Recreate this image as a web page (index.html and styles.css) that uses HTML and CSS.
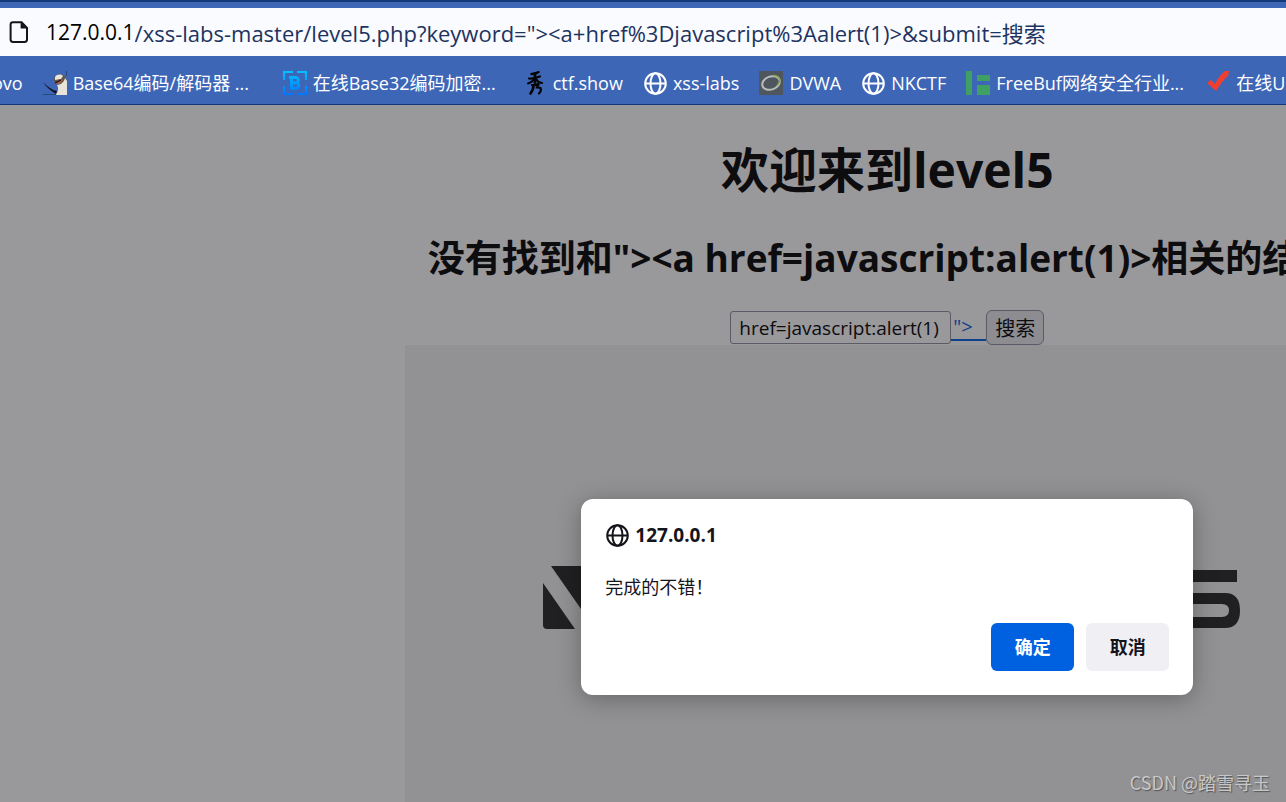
FILE: index.html
```
<!DOCTYPE html>
<html lang="zh-CN">
<head>
  <meta charset="UTF-8" />
  <meta name="viewport" content="width=device-width, initial-scale=1.0" />
  <title>欢迎来到level5</title>
  <link rel="stylesheet" href="styles.css">
</head>
<body>
  <!-- shared globe icon -->
  <svg class="sprite" aria-hidden="true">
    <symbol id="globe" viewBox="0 0 24 24">
      <g fill="none" stroke="currentColor" stroke-width="2">
        <circle cx="12.500" cy="12.500" r="10.300" />
        <ellipse cx="12.500" cy="12.500" rx="5" ry="10.300" />
        <path d="M2 12.500h21" />
      </g>
    </symbol>
  </svg>

  <header class="browser">
    <div class="urlbar">
      <svg class="page-icon" viewBox="0 0 20 24" aria-hidden="true">
        <path d="M4 2.2h8.6l5.4 5.600v11.800a2.400 2.400 0 0 1-2.400 2.400H4a2.400 2.400 0 0 1-2.400-2.400V4.600A2.400 2.400 0 0 1 4 2.200z" fill="none" stroke="#15141a" stroke-width="2" />
        <path d="M11.600 2v6.600H18z" fill="#15141a" />
      </svg>
      <label class="host" for="url">127.0.0.1</label>
      <input class="url" id="url" type="text" value="/xss-labs-master/level5.php?keyword=&quot;&gt;&lt;a+href%3Djavascript%3Aalert(1)&gt;&amp;submit=搜索">
    </div>

    <nav class="bookmarks">
      <a class="bookmark" href="#">ovo</a>
      <a class="bookmark long" href="#">
        <svg viewBox="0 0 24 24" aria-hidden="true">
          <path d="M0 11c5 5 9 8 14 9l-1 3C8 20 3 16 0 11z" fill="#10131b" />
          <path d="M0 23.500h15M23.500 0v5" stroke="#27477f" />
          <path d="M11 7c2-4 8-5 11-2l2 4v14H13c2-4 4-7 2-10-2-1-5-3-4-6z" fill="#5e564e" />
          <path d="M14 14c4 0 7-3 8-7l2 3v14H13c2-4 3-7 1-10z" fill="#e9e4da" />
          <path d="M12 6c2-3 6-3 8-1l-2 3-6 1z" fill="#e9e4da" />
          <path d="M11 12l5-4 4 1-4 4z" fill="#c4603d" />
          <path d="M12 12l6-3" stroke="#222" stroke-width="1.500" />
        </svg>
        <span>Base64编码/解码器 ...</span>
      </a>
      <a class="bookmark long" href="#">
        <svg viewBox="0 0 24 24" aria-hidden="true">
          <defs>
            <linearGradient id="cyan" gradientUnits="userSpaceOnUse" x1="0" y1="0" x2="0" y2="24">
              <stop offset="0" stop-color="#00c3ff" />
              <stop offset="1" stop-color="#0076ff" />
            </linearGradient>
          </defs>
          <path d="M1 9V1h9M14 1h9v8M23 15v8h-9M10 23H1v-8" fill="none" stroke="url(#cyan)" stroke-width="2.200" />
          <path d="M8.500 6.500v11H13a2.750 2.750 0 0 0 0-5.500H8.500h4a2.750 2.750 0 0 0 0-5.500H6" fill="none" stroke="url(#cyan)" stroke-width="3" />
        </svg>
        <span>在线Base32编码加密...</span>
      </a>
      <a class="bookmark" href="#">
        <svg viewBox="0 0 24 24" aria-hidden="true">
          <g fill="none" stroke="#050505" stroke-linecap="round">
            <path d="M8.500 3c3 0 5-.5 7-2" stroke-width="2.400" />
            <path d="M6 7.500c4 .5 7-.5 11-2" stroke-width="2.200" />
            <path d="M12 2.500v9" stroke-width="2.800" />
            <path d="M11 8c-1 2-3 3.500-6 4.500M13 8c1 2 3 3.500 6 4" stroke-width="2" />
            <path d="M9 14c3 .5 5 0 7-1.500l-2 4 3.500.5c1 2 0 4-1.500 5.500" stroke-width="2.200" />
            <path d="M10.500 14c0 4-1 6-3 8.500" stroke-width="2.600" />
          </g>
        </svg>
        <span>ctf.show</span>
      </a>
      <a class="bookmark" href="#">
        <svg aria-hidden="true"><use href="#globe" /></svg>
        <span>xss-labs</span>
      </a>
      <a class="bookmark" href="#">
        <svg viewBox="0 0 24 24" aria-hidden="true">
          <path d="M0 0h24v24H0z" fill="#50565e" />
          <ellipse cx="12" cy="12" rx="9" ry="6.500" transform="rotate(-20 12 12)" fill="none" stroke="#b9bdbb" stroke-width="2" />
          <path d="M14 4.500c7 0 9 5 4 10" fill="none" stroke="#87a646" stroke-width="1.500" />
        </svg>
        <span>DVWA</span>
      </a>
      <a class="bookmark" href="#">
        <svg aria-hidden="true"><use href="#globe" /></svg>
        <span>NKCTF</span>
      </a>
      <a class="bookmark long" href="#">
        <svg viewBox="0 0 24 24" aria-hidden="true">
          <path d="M0 0h6v24H0zM11 4h13v6H11zM11 14h13v10H11z" fill="#40a063" />
        </svg>
        <span>FreeBuf网络安全行业...</span>
      </a>
      <a class="bookmark" href="#">
        <svg viewBox="0 0 24 24" aria-hidden="true">
          <path d="M1 12l4-3 4 4c3-6 6-10 10-13h4l-1 5c-5 4-8 9-12 15z" fill="#f03e2f" />
        </svg>
        <span>在线URL</span>
      </a>
    </nav>
  </header>

  <div class="viewport">
    <main class="page">
      <h1>欢迎来到level5</h1>
      <h2>没有找到和"&gt;&lt;a href=javascript:alert(1)&gt;相关的结果.</h2>
      <form class="search" onsubmit="return false">
        <input class="keyword" type="text" aria-label="keyword" value="href=javascript:alert(1)">
        <a class="payload" href="#">"&gt; </a>
        <button class="submit" type="submit">搜索</button>
      </form>
      <svg class="banner" viewBox="0 0 964 504" aria-hidden="true">
        <path d="M0 0h964v504H0z" fill="#f2f2f2" />
        <g fill="#232323">
          <path d="M138 238l32 46h-28q-4 0-4-4z" />
          <path d="M146 221h60v63h-16z" />
          <path d="M740 225h92v12h-92z" />
          <path d="M740 248h80q15 0 15 17.500t-15 17.500h-80v-11h77q7 0 7-6.500t-7-6.500h-77z" />
        </g>
      </svg>
    </main>

    <div class="overlay">
      <section class="modal" role="dialog" aria-labelledby="origin">
        <div class="origin">
          <svg aria-hidden="true"><use href="#globe" /></svg>
          <strong id="origin">127.0.0.1</strong>
        </div>
        <p>完成的不错！</p>
        <div class="actions">
          <button class="primary">确定</button>
          <button>取消</button>
        </div>
      </section>
    </div>
  </div>

  <div class="watermark">CSDN @踏雪寻玉</div>
</body>
</html>
```
FILE: styles.css
```
* {
  box-sizing: border-box;
}
body {
  margin: 0;
  height: 100vh;
  display: flex;
  flex-direction: column;
  overflow: hidden;
  position: relative;
  font-family: "Open Sans", "Noto Sans CJK SC", sans-serif;
  color: #000;
}
input, button {
  font-family: inherit;
}
.sprite {
  position: absolute;
  width: 0;
  height: 0;
}

/* browser chrome */
.browser {
  background: #3e66b7;
  border-top: 2px solid #12397a;
  border-bottom: 1px solid #12397a;
  padding-top: 6px;
}
.urlbar {
  display: flex;
  align-items: center;
  height: 48px;
  padding-left: 9px;
  background: #fafbff;
  font-size: 21px;
}
.page-icon {
  width: 20px;
  height: 24px;
  margin-right: 17px;
}
.url {
  flex: 1;
  border: 0;
  padding: 0;
  background: none;
  color: #1d3360;
  font-size: 22px;
  outline: none;
}
.bookmarks {
  display: flex;
  align-items: center;
  gap: 20px;
  height: 48px;
  padding-bottom: 2px;
  white-space: nowrap;
  overflow: hidden;
}
.bookmark {
  display: flex;
  flex-shrink: 0;
  align-items: center;
  gap: 6px;
  margin-top: 8px;
  color: #fff;
  font-size: 18px;
  line-height: 24px;
  text-decoration: none;
}
/* bar is scrolled a little to the right */
.bookmark:first-child {
  margin-left: -8px;
}
.bookmark svg {
  width: 24px;
  height: 24px;
}
.long {
  width: 220px;
}

/* page under the alert */
.viewport {
  position: relative;
  flex: 1;
  width: 138%;
  min-height: 0;
  overflow: hidden;
}
.page {
  display: flex;
  flex-direction: column;
  align-items: center;
}
h1, h2 {
  margin: 0;
  white-space: nowrap;
}
h1 {
  margin-top: 33px;
  font-size: 48px;
  line-height: 64px;
}
h2 {
  margin-top: 32px;
  font-size: 37px;
  line-height: 48px;
}
.search {
  display: flex;
  align-items: center;
  margin-top: 28px;
  height: 35px;
  font-size: 20px;
}
.keyword {
  width: 221px;
  height: 33px;
  padding: 0 4px 0 8px;
  border: 1px solid #8f8f9d;
  border-radius: 3px;
  font-size: 19px;
}
.payload {
  width: 35px;
  padding-left: 2px;
  color: #0061e0;
  line-height: 24px;
  border-bottom: 2px solid #0061e0;
  text-decoration: none;
}
.submit {
  height: 35px;
  padding: 0 8px;
  border: 1px solid #8f8f9d;
  border-radius: 6px;
  background: #e9e9ed;
  font-size: 20px;
}
.banner {
  width: 964px;
}

/* alert */
.overlay {
  position: absolute;
  inset: 0;
  display: flex;
  justify-content: center;
  align-items: flex-start;
  padding-top: 394px;
  background: rgba(28, 27, 34, 0.45);
}
.modal {
  width: 612px;
  padding: 24px;
  border-radius: 12px;
  background: #fff;
  box-shadow: 0 4px 24px rgba(0, 0, 0, 0.3);
  color: #15141a;
  font-size: 18px;
  line-height: 24px;
}
.origin {
  display: flex;
  align-items: center;
  gap: 6px;
  font-size: 19px;
}
.origin svg {
  width: 24px;
  height: 24px;
}
.modal p {
  margin: 28px 0 24px;
}
.actions {
  display: flex;
  justify-content: flex-end;
  gap: 12px;
}
.actions button {
  width: 83px;
  height: 48px;
  padding: 0 0 2px;
  border: 0;
  border-radius: 6px;
  background: #f0f0f4;
  color: #15141a;
  font-size: 18px;
  font-weight: bold;
}
.actions .primary {
  background: #0061e0;
  color: #fff;
}
.watermark {
  position: absolute;
  right: 16px;
  bottom: 8px;
  color: #c8c8c9;
  font-family: "Noto Sans CJK SC", sans-serif;
  font-size: 18px;
  line-height: 24px;
  text-shadow: 1px 1px 1px #555;
}
```
